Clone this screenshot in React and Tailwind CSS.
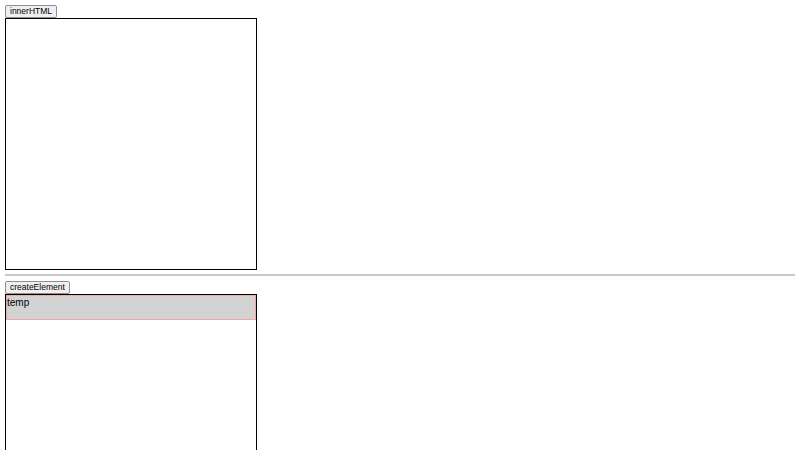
export default function App() {
  return (
    <div className="h-[450px] w-[800px] overflow-hidden bg-white p-[5px] font-['Liberation_Sans',Arial,sans-serif] text-black">
      <button className="block h-[13px] rounded-[2px] border border-[#8f8f8f] bg-[#efefef] px-[4px] text-[8.5px] leading-[9px]">
        innerHTML
      </button>
      <div className="h-[252px] w-[252px] border border-black"></div>
      <hr className="mt-[4px] mb-[5px] border-t-2 border-[#c8c8c8]" />
      <button className="mt-[3px] block h-[13px] rounded-[2px] border border-[#8f8f8f] bg-[#efefef] px-[4px] text-[8.5px] leading-[9px]">
        createElement
      </button>
      <div className="h-[252px] w-[252px] border border-black">
        <div className="h-[25px] border border-[#eea8a8] bg-[#d3d3d3] pt-px text-[10px] leading-[12px]">
          temp
        </div>
      </div>
    </div>
  );
}
